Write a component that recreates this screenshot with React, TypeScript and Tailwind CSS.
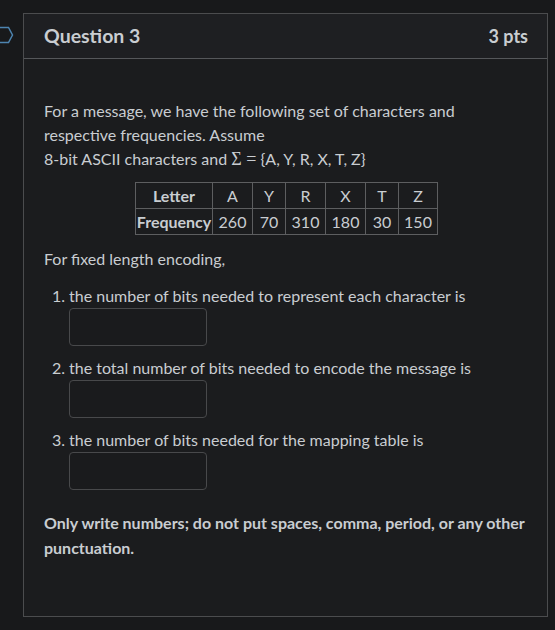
const letters = ["A", "Y", "R", "X", "T", "Z"];
const freqs = ["260", "70", "310", "180", "30", "150"];
const colW = ["w-[40px]", "w-[33px]", "w-[40px]", "w-[40px]", "w-[33px]", "w-[39px]"];

const questions = [
  "the number of bits needed to represent each character is",
  "the total number of bits needed to encode the message is",
  "the number of bits needed for the mapping table is",
];

export default function App() {
  return (
    <div
      className="min-h-[630px] bg-[#18191b] pt-[13px] text-[#c9cdd1]"
      style={{ fontFamily: "Lato, 'Noto Sans', sans-serif" }}
    >
      <div className="relative">
        <svg
          className="absolute left-0 top-[13px]"
          width="14"
          height="18"
          viewBox="0 0 14 18"
        >
          <path d="M-2 1.5 H8.5 L12.5 9 L8.5 16.5 H-2" fill="none" stroke="#4d84b0" strokeWidth="1.5" />
        </svg>
        <div className="ml-[23px] w-[525px] h-[604px] border border-[#4b4c4e] bg-[#1b1c1e]">
          <div className="h-[45px] flex items-center justify-between pl-[20px] pr-[19px] bg-[#1e1f22] border-b border-[#55575a]">
            <span className="text-[19.5px] font-bold">Question 3</span>
            <span className="text-[18px] font-bold">3 pts</span>
          </div>
          <div className="pl-[20px] pr-[18px] pt-[40px] text-[16px] leading-[24px]">
            <p>
              For a message, we have the following set of characters and respective frequencies. Assume
              <br />
              8-bit ASCII characters and{" "}
              <span style={{ fontFamily: "'Liberation Serif', serif" }} className="text-[18px]">
                Σ&nbsp;=
              </span>{" "}
              {"{A, Y, R, X, T, Z}"}
            </p>
            <table className="mt-[11px] ml-[91px] border-collapse border border-[#5d5e60] text-center leading-[24px]">
              <tbody>
                <tr className="h-[26px]">
                  <td className="w-[77px] border border-[#5d5e60] font-bold px-0">Letter</td>
                  {letters.map((l, i) => (
                    <td key={l} className={`${colW[i]} border border-[#5d5e60]`}>
                      {l}
                    </td>
                  ))}
                </tr>
                <tr className="h-[26px]">
                  <td className="border border-[#5d5e60] font-bold px-0">Frequency</td>
                  {freqs.map((f, i) => (
                    <td key={i} className={`${colW[i]} border border-[#5d5e60]`}>
                      {f}
                    </td>
                  ))}
                </tr>
              </tbody>
            </table>
            <p className="mt-[12px]">For fixed length encoding,</p>
            <ol className="mt-[13px] flex flex-col gap-[10px]">
              {questions.map((q, i) => (
                <li key={i} className="flex flex-col">
                  <div className="flex">
                    <span className="w-[25px] text-right pr-[4px]">{i + 1}.</span>
                    <span>{q}</span>
                  </div>
                  <div className="ml-[25px] w-[138px] h-[38px] rounded-[4px] border border-[#48494b] bg-[#1a1b1d]" />
                </li>
              ))}
            </ol>
            <p className="mt-[20px] font-bold leading-[25px]">
              Only write numbers; do not put spaces, comma, period, or any other punctuation.
            </p>
          </div>
        </div>
      </div>
    </div>
  );
}
